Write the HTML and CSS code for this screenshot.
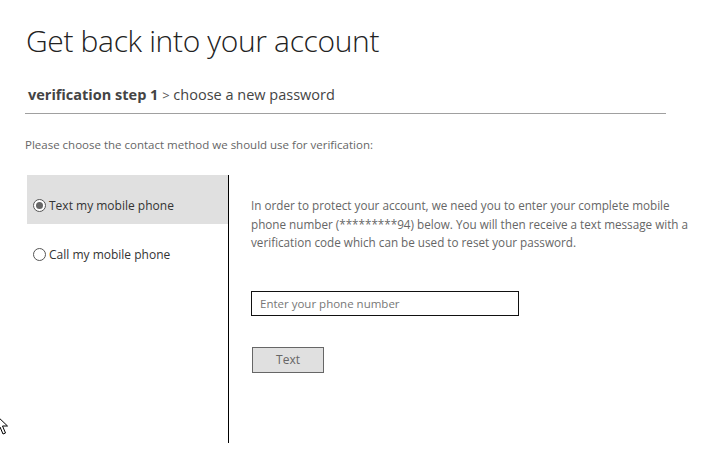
FILE: index.html
```html
<!DOCTYPE html>
<html lang="en">
<head>
<meta charset="utf-8">
<title>Get back into your account</title>
<link rel="stylesheet" href="styles.css">
</head>
<body>
<div class="page">
  <h1 class="title">Get back into your account</h1>
  <div class="steps"><span class="current">verification step 1</span> <span class="sep">&gt;</span> choose a new password</div>
  <p class="intro">Please choose the contact method we should use for verification:</p>
  <div class="panel">
    <div class="options">
      <label class="option selected"><span class="radio checked"></span>Text my mobile phone</label>
      <label class="option"><span class="radio"></span>Call my mobile phone</label>
    </div>
    <div class="detail">
      <p class="desc">In order to protect your account, we need you to enter your complete mobile phone number (*********94) below. You will then receive a text message with a verification code which can be used to reset your password.</p>
      <input class="phone" type="text" placeholder="Enter your phone number">
      <div><button class="btn" type="button">Text</button></div>
    </div>
  </div>
</div>
<svg class="cursor" width="14" height="22" viewBox="0 0 14 22"><path d="M1 1 L1 17 L5 13 L8 20 L10.5 19 L7.5 12 L12.5 12 Z" fill="#fff" stroke="#000" stroke-width="1" stroke-linejoin="miter"/></svg>
</body>
</html>
```
FILE: styles.css
```css
html, body {
  margin: 0;
  padding: 0;
  background: #fff;
}
body {
  font-family: "Open Sans", "Noto Sans", "Liberation Sans", sans-serif;
  color: #333;
  width: 708px;
  height: 451px;
  overflow: hidden;
  position: relative;
}
.page {
  padding: 22px 0 0 25px;
  width: 641px;
}
.title {
  margin: 0 0 0 1px;
  font-size: 30px;
  font-weight: 300;
  line-height: 38px;
  color: #222;
  letter-spacing: -0.35px;
}
.steps {
  margin-top: 25px;
  padding: 0 0 8px 3px;
  font-size: 14.5px;
  line-height: 20px;
  color: #444;
  border-bottom: 1px solid #a0a0a0;
}
.steps .current {
  font-weight: 700;
  color: #444;
}
.steps .sep {
  font-size: 13px;
  color: #555;
}
.intro {
  margin: 22px 0 0 0;
  font-size: 11.5px;
  line-height: 18px;
  color: #666;
}
.panel {
  display: flex;
  margin-top: 21px;
  margin-left: 2px;
  height: 268px;
  width: 680px;
}
.options {
  flex: 0 0 auto;
  width: 201px;
  border-right: 1px solid #000;
  display: flex;
  flex-direction: column;
}
.option {
  display: flex;
  align-items: center;
  height: 49px;
  padding: 11px 0 0 6px;
  box-sizing: border-box;
  font-size: 12px;
  color: #333;
}
.option.selected {
  background: #e0e0e0;
}
.radio {
  width: 11px;
  height: 11px;
  border: 1px solid #555;
  border-radius: 50%;
  box-sizing: content-box;
  margin-right: 3px;
  position: relative;
  background: #fff;
}
.radio.checked::after {
  content: "";
  position: absolute;
  left: 2px;
  top: 2px;
  width: 7px;
  height: 7px;
  border-radius: 50%;
  background: #666;
}
.detail {
  flex: 0 0 auto;
  padding: 21px 0 0 22px;
  width: 440px;
}
.desc {
  margin: 0;
  font-size: 11.7px;
  line-height: 18.5px;
  color: #666;
}
.phone {
  display: block;
  margin-top: 39px;
  width: 268px;
  height: 25px;
  box-sizing: border-box;
  border: 1px solid #111;
  padding: 0 8px;
  font-family: inherit;
  font-size: 11.5px;
  color: #333;
  outline: none;
}
.phone::placeholder {
  color: #777;
}
.btn {
  margin-top: 31px;
  margin-left: 1px;
  width: 72px;
  height: 26px;
  background: #e0e0e0;
  border: 1px solid #666;
  font-family: inherit;
  font-size: 12px;
  color: #666;
  padding: 0;
}
.cursor {
  position: absolute;
  left: -5px;
  top: 414px;
}
```
